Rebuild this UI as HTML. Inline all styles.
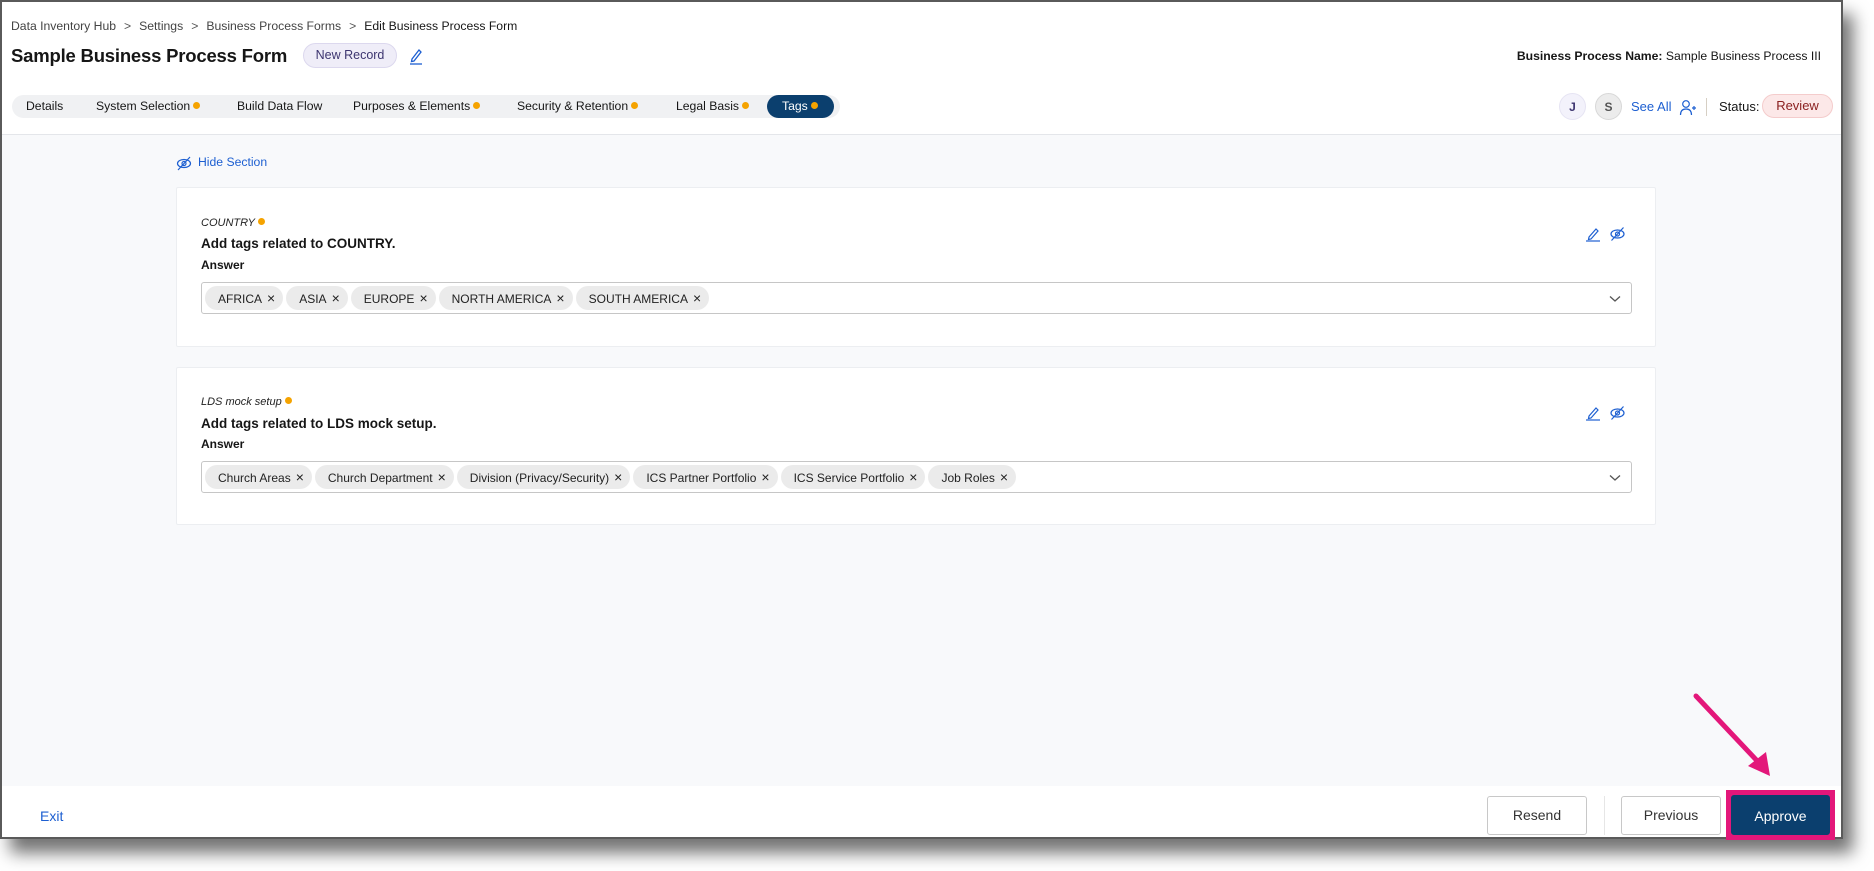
<!DOCTYPE html>
<html><head><meta charset="utf-8">
<style>
*{box-sizing:border-box;margin:0;padding:0}
body{width:1874px;height:871px;background:#fff;font-family:"Liberation Sans",sans-serif;position:relative;overflow:hidden;color:#161616}
.frame{position:absolute;left:0;top:0;width:1843px;height:839px;border:2px solid #5a5a5a;border-top-width:2px;background:#f8f9fb;box-shadow:10px 14px 16px rgba(0,0,0,.55)}
.abs{position:absolute;white-space:nowrap}
.header{position:absolute;left:0;top:0;width:1839px;height:133px;background:#fff;border-bottom:1px solid #e4e6ea}
.bc{top:17px;left:9px;font-size:12.2px;color:#444}
.bc b{font-weight:normal;color:#161616}
.bc span.s{margin:0 8px;color:#555}
.title{top:43px;left:9px;font-size:18.5px;font-weight:bold;letter-spacing:-0.2px}
.pill{top:41px;left:301px;width:94px;height:25px;border-radius:13px;background:#efedf8;border:1px solid #dcd8ee;color:#3d3570;font-size:12.5px;text-align:center;line-height:23px}
.tabs{top:93px;left:10px;width:828px;height:23px;background:#f0f1f3;border-radius:12px}
.tab{position:absolute;top:0;height:23px;line-height:23px;font-size:12.2px;color:#161616}
.dot{display:inline-block;width:7px;height:7px;border-radius:50%;background:#f5a300;margin-left:3px;vertical-align:1px}
.tab.act{background:#0b3f6e;color:#fff;border-radius:12px;padding:0 16px 0 15px}
.circ{top:91px;width:27px;height:27px;border-radius:50%;font-size:12px;font-weight:bold;text-align:center;line-height:26px}
.card{position:absolute;left:174px;width:1480px;background:#fff;border:1px solid #eceef1;border-radius:2px}
.lbl{font-size:11px;font-style:italic;color:#222}
.q{font-size:13.5px;font-weight:bold}
.ans{font-size:12px;font-weight:bold}
.inp{position:absolute;left:24px;width:1431px;height:32px;border:1px solid #c6c6c6;border-radius:3px}
.tag{display:inline-block;height:24px;line-height:24px;background:#ebebeb;border-radius:12px;padding:0 8px 0 13px;font-size:12px;margin:3px 0 0 3px;color:#222}
.tag i{font-style:normal;margin-left:5px;font-size:14px}
.btn{position:absolute;top:794px;height:39px;border:1px solid #c8c8c8;border-radius:3px;background:#fff;font-size:14px;text-align:center;line-height:37px;color:#333}
</style></head><body>
<div class="frame">
 <div class="header"></div>
 <div class="abs bc">Data Inventory Hub<span class="s">&gt;</span>Settings<span class="s">&gt;</span>Business Process Forms<span class="s">&gt;</span><b>Edit Business Process Form</b></div>
 <div class="abs title">Sample Business Process Form</div>
 <div class="abs pill">New Record</div>
 <svg class="abs" style="left:406px;top:45px" width="16" height="18" viewBox="0 0 16 18"><path d="M4 12 L11 3 L13 5 L6 14 L3.5 14.5 Z" fill="none" stroke="#1d5fd1" stroke-width="1.3"/><line x1="2" y1="17" x2="14" y2="17" stroke="#1d5fd1" stroke-width="1.3"/></svg>
 <div class="abs" style="top:47px;right:20px;font-size:12.2px"><b>Business Process Name:</b> Sample Business Process III</div>
 <div class="abs tabs">
  <div class="tab" style="left:14px">Details</div>
  <div class="tab" style="left:84px">System Selection<span class="dot"></span></div>
  <div class="tab" style="left:225px">Build Data Flow</div>
  <div class="tab" style="left:341px">Purposes &amp; Elements<span class="dot"></span></div>
  <div class="tab" style="left:505px">Security &amp; Retention<span class="dot"></span></div>
  <div class="tab" style="left:664px">Legal Basis<span class="dot"></span></div>
  <div class="tab act" style="left:755px">Tags<span class="dot"></span></div>
 </div>
 <div class="abs circ" style="left:1557px;background:#f3f2fb;border:1px solid #e6e4f3;color:#3d3570">J</div>
 <div class="abs circ" style="left:1593px;background:#ececec;border:1px solid #d8d8d8;color:#555">S</div>
 <div class="abs" style="left:1629px;top:97px;font-size:13px;color:#1d5fd1">See All</div>
 <svg class="abs" style="left:1677px;top:97px" width="18" height="17" viewBox="0 0 18 17"><circle cx="7" cy="5" r="3.3" fill="none" stroke="#1d5fd1" stroke-width="1.2"/><path d="M1.5 16 Q1.5 10 7 10 Q12.5 10 12.5 16" fill="none" stroke="#1d5fd1" stroke-width="1.2"/><path d="M13 9h4M15 7v4" stroke="#1d5fd1" stroke-width="1.2"/></svg>
 <div class="abs" style="left:1704px;top:96px;width:1px;height:18px;background:#d6cfc4"></div>
 <div class="abs" style="left:1717px;top:97px;font-size:13px">Status:</div>
 <div class="abs" style="left:1760px;top:92px;width:71px;height:24px;border-radius:12px;background:#fce8e8;border:1px solid #f4cccc;color:#8a1f1f;font-size:13px;text-align:center;line-height:22px">Review</div>

 <svg class="abs" style="left:174px;top:153px" width="16" height="16" viewBox="0 0 16 16"><ellipse cx="8" cy="8.5" rx="6.5" ry="4" fill="none" stroke="#1d5fd1" stroke-width="1.2"/><circle cx="8" cy="8.5" r="2" fill="none" stroke="#1d5fd1" stroke-width="1.2"/><line x1="2" y1="15" x2="14" y2="2" stroke="#1d5fd1" stroke-width="1.2"/></svg>
 <div class="abs" style="left:196px;top:153px;font-size:12.2px;color:#1d5fd1">Hide Section</div>

 <div class="card" style="top:185px;height:160px">
  <div class="abs lbl" style="left:24px;top:29px">COUNTRY<span class="dot"></span></div>
  <div class="abs q" style="left:24px;top:48px">Add tags related to COUNTRY.</div>
  <div class="abs ans" style="left:24px;top:70px">Answer</div>
  <svg class="abs" style="left:1408px;top:38px" width="16" height="16" viewBox="0 0 16 16"><path d="M4 11 L11 3 L13 5 L6 13 L3.5 13.5 Z" fill="none" stroke="#1d5fd1" stroke-width="1.2"/><line x1="1" y1="15" x2="15" y2="15" stroke="#1d5fd1" stroke-width="1.2"/></svg>
  <svg class="abs" style="left:1432px;top:38px" width="17" height="16" viewBox="0 0 16 16"><ellipse cx="8" cy="8" rx="6.5" ry="4" fill="none" stroke="#1d5fd1" stroke-width="1.2"/><circle cx="8" cy="8" r="2" fill="none" stroke="#1d5fd1" stroke-width="1.2"/><line x1="2" y1="14.5" x2="14" y2="1.5" stroke="#1d5fd1" stroke-width="1.2"/></svg>
  <div class="inp" style="top:94px">
   <span class="tag">AFRICA<i>×</i></span><span class="tag">ASIA<i>×</i></span><span class="tag">EUROPE<i>×</i></span><span class="tag">NORTH AMERICA<i>×</i></span><span class="tag">SOUTH AMERICA<i>×</i></span>
   <svg class="abs" style="right:10px;top:12px" width="12" height="8" viewBox="0 0 12 8"><path d="M1 1.5 L6 6 L11 1.5" fill="none" stroke="#555" stroke-width="1.3"/></svg>
  </div>
 </div>

 <div class="card" style="top:365px;height:158px">
  <div class="abs lbl" style="left:24px;top:28px">LDS mock setup<span class="dot"></span></div>
  <div class="abs q" style="left:24px;top:48px">Add tags related to LDS mock setup.</div>
  <div class="abs ans" style="left:24px;top:69px">Answer</div>
  <svg class="abs" style="left:1408px;top:37px" width="16" height="16" viewBox="0 0 16 16"><path d="M4 11 L11 3 L13 5 L6 13 L3.5 13.5 Z" fill="none" stroke="#1d5fd1" stroke-width="1.2"/><line x1="1" y1="15" x2="15" y2="15" stroke="#1d5fd1" stroke-width="1.2"/></svg>
  <svg class="abs" style="left:1432px;top:37px" width="17" height="16" viewBox="0 0 16 16"><ellipse cx="8" cy="8" rx="6.5" ry="4" fill="none" stroke="#1d5fd1" stroke-width="1.2"/><circle cx="8" cy="8" r="2" fill="none" stroke="#1d5fd1" stroke-width="1.2"/><line x1="2" y1="14.5" x2="14" y2="1.5" stroke="#1d5fd1" stroke-width="1.2"/></svg>
  <div class="inp" style="top:93px">
   <span class="tag">Church Areas<i>×</i></span><span class="tag">Church Department<i>×</i></span><span class="tag">Division (Privacy/Security)<i>×</i></span><span class="tag">ICS Partner Portfolio<i>×</i></span><span class="tag">ICS Service Portfolio<i>×</i></span><span class="tag">Job Roles<i>×</i></span>
   <svg class="abs" style="right:10px;top:12px" width="12" height="8" viewBox="0 0 12 8"><path d="M1 1.5 L6 6 L11 1.5" fill="none" stroke="#555" stroke-width="1.3"/></svg>
  </div>
 </div>

 <div class="abs" style="left:0;top:784px;width:1839px;height:51px;background:#fff"></div>
 <div class="abs" style="left:38px;top:806px;font-size:14px;color:#1d5fd1">Exit</div>
 <div class="btn" style="left:1485px;width:100px">Resend</div>
 <div class="abs" style="left:1602px;top:794px;width:1px;height:39px;background:#e6e6e6"></div>
 <div class="btn" style="left:1619px;width:100px">Previous</div>
 <div class="abs" style="left:1724px;top:788px;width:109px;height:50px;background:#e3177a"></div>
 <div class="btn" style="left:1729px;top:793px;width:99px;height:40px;background:#0b3f6e;border-color:#0b3f6e;color:#fff;line-height:40px">Approve</div>
</div>
<svg class="abs" style="left:1680px;top:680px" width="120" height="110" viewBox="0 0 120 110"><line x1="16" y1="16" x2="82" y2="86" stroke="#e3177a" stroke-width="5" stroke-linecap="round"/><path d="M68 86 L90 96 L86 72 Z" fill="#e3177a"/></svg>
</body></html>
